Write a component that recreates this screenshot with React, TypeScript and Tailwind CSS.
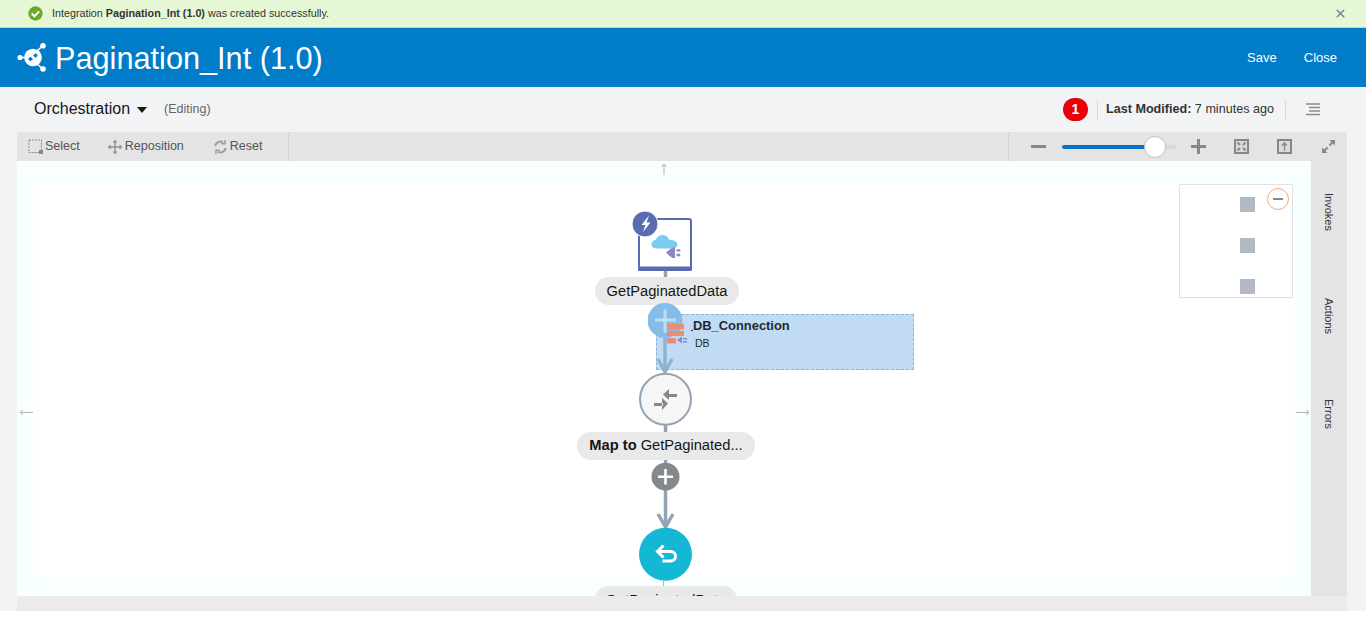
import React from "react";
import { X } from "lucide-react";

const Pill = ({ className, children }: { className: string; children: React.ReactNode }) => (
  <div className={"absolute flex items-center justify-center rounded-[14px] bg-[#e9e9e9] text-[14.7px] text-[#161616] whitespace-nowrap h-[28px] " + className}>{children}</div>
);

const SelectIcon = () => (
  <svg width="16" height="16" viewBox="0 0 16 16" className="shrink-0">
    <rect x="1" y="1" width="12.5" height="12.5" fill="none" stroke="#8a8d90" strokeWidth="1" strokeDasharray="2 1" />
    <rect x="11" y="11" width="4" height="4" fill="#85888b" />
  </svg>
);
const MoveIcon = () => (
  <svg width="16" height="16" viewBox="0 0 16 16" className="shrink-0" fill="none" stroke="#8f9295" strokeWidth="1.4">
    <path d="M8 2v12M2 8h12" />
    <path d="M6 3.200L8 1l2 2.200zM6 12.800L8 15l2-2.200zM3.200 6L1 8l2.200 2zM12.800 6L15 8l-2.200 2z" fill="#8f9295" strokeWidth="0.6" />
  </svg>
);
const ResetIcon = () => (
  <svg width="15" height="16" viewBox="0 0 15 16" className="shrink-0" fill="none" stroke="#9a9da0" strokeWidth="2">
    <path d="M2.200 7A5.400 5.400 0 0 1 10 3.200" />
    <path d="M12.800 9A5.400 5.400 0 0 1 5 12.800" />
    <path d="M12 1v3.800H8.200M3 15v-3.800h3.800" strokeWidth="1.500" />
  </svg>
);

const Logo = () => (
  <svg width="30" height="30" viewBox="0 0 30 30" className="shrink-0">
    <g stroke="#fff" strokeWidth="1.6" fill="#fff">
      <path d="M3 14.500h8M20 8l6-5.500M20 21l6 5" />
      <circle cx="3" cy="14.500" r="1.800" />
      <circle cx="26" cy="2.800" r="2" />
      <circle cx="26" cy="26" r="2" />
    </g>
    <circle cx="16" cy="14.500" r="8.800" fill="#fff" />
    <path d="M11.500 16h4M13.500 14v4" stroke="#007cc8" strokeWidth="1.800" />
    <path d="M16.500 12.500h4M18.500 10.500v4" stroke="#007cc8" strokeWidth="1.800" />
  </svg>
);

const Diagram = () => (
  <svg width="1294" height="435" viewBox="0 0 1294 435" className="absolute left-0 top-0">
    {/* connectors */}
    <path d="M648.500 108v10M648.500 264v8M648.500 298v8M648.500 328v38" stroke="#94a3b3" strokeWidth="3.500" fill="none" />
    <path d="M641 353l7.500 13 7.500-13" stroke="#94a3b3" strokeWidth="3.500" fill="none" />

    {/* trigger card */}
    <rect x="622" y="58" width="52" height="51" rx="2" fill="#fff" stroke="#5b6bb1" strokeWidth="2" />
    <rect x="621" y="105.500" width="54" height="4.500" rx="1.500" fill="#5b6bb1" />
    <path d="M639 87.500c-3 0-4.500-2-4.500-4.200 0-2.500 2-4.300 4.200-4.300 .8-3 3.500-5 6.600-5 3.500 0 6.200 2.300 7 5 3.500-.5 8.200 1 8.200 4.300 0 2.700-2 4.200-4.500 4.200z" fill="#7acdf1" />
    <path d="M649 91.500l3-2.500 3.500-2.500h2.500v10.500h-2.500l-3.500-2.500z" fill="#8f86c3" />
    <path d="M659.500 88.200h3.800v2.400h-3.800zM659.500 92.800h3.800v2.400h-3.800z" fill="#8f86c3" />
    <circle cx="628" cy="63" r="13" fill="#5b6bb1" stroke="#fff" strokeWidth="1" />
    <path d="M632 54.500l-7.500 9.500h4l-2.500 7 7.500-9.500h-4z" fill="#fff" />

    {/* map node */}
    <circle cx="648.500" cy="238.300" r="25.500" fill="#f6f6f6" stroke="#94a3b3" strokeWidth="2" />
    <path d="M637 242h9v3h-9zM645 237v12l6-6.500zM652 233h8v3h-8zM652 228v11l-6-5.500z" fill="#85888b" />

    {/* plus node */}
    <circle cx="648.500" cy="315.700" r="14" fill="#85898c" />
    <path d="M648.500 308v15.400M641 315.700h15" stroke="#fff" strokeWidth="2.600" />

    {/* return node */}
    <circle cx="648.500" cy="393.300" r="26.500" fill="#14b8d4" />
    <path d="M641 390.500h12.500c3.500 0 5 2.300 5 4.700s-1.500 4.800-5 4.800h-8" fill="none" stroke="#fff" strokeWidth="3" />
    <path d="M646.500 384.500l-6 6 6 6" fill="none" stroke="#fff" strokeWidth="3" />

    {/* pan arrows */}
    <g stroke="#b5b5b5" strokeWidth="1" fill="none">
      <path d="M647 14V3M644.500 6l2.500-3 2.500 3" />
      <path d="M646.500 420v11M644 428l2.500 3 2.500-3" />
      <path d="M3 251.500h13M6 249l-3 2.500 3 2.500" />
      <path d="M1279 251.500h13M1289 249l3 2.500-3 2.500" />
    </g>
  </svg>
);

export default function App() {
  return (
    <div className="w-[1366px] h-[620px] overflow-hidden bg-white font-['Liberation_Sans',Arial,sans-serif]">
      {/* success banner */}
      <div className="h-[28px] bg-[#e6f7d5] border-b border-[#bfdcae] flex items-center pl-[28px] pr-[19px]">
        <svg width="15" height="15" viewBox="0 0 15 15" className="shrink-0 mr-[9px]">
          <circle cx="7.500" cy="7.500" r="7.200" fill="#6bab29" />
          <path d="M3.800 7.500l2.600 2.700 4.800-4.800" fill="none" stroke="#fff" strokeWidth="2" />
        </svg>
        <span className="text-[10.75px] text-[#333]">Integration <span className="font-bold">Pagination_Int (1.0)</span> was created successfully.</span>
        <X className="ml-auto text-[#7f8a8a]" size={13} strokeWidth={3} />
      </div>

      {/* title bar */}
      <div className="h-[59px] bg-[#007cc8] flex items-center pl-[17px] pr-[29px] text-white">
        <Logo />
        <h1 className="ml-[8px] mt-[4px] text-[30.7px] leading-none">Pagination_Int (1.0)</h1>
        <button className="ml-auto text-[13px]">Save</button>
        <button className="ml-[27px] text-[13px]">Close</button>
      </div>

      {/* body */}
      <div className="h-[524px] bg-[#f2f3f5] pl-[17px] pr-[19px] flex flex-col">
        <div className="h-[45px] flex items-center">
          <span className="ml-[17px] text-[16px] text-[#161616] mb-[2px]">Orchestration</span>
          <svg width="10" height="6" viewBox="0 0 10 6" className="ml-[7px] mt-[1px]"><path d="M0 0h10L5 6z" fill="#161616" /></svg>
          <span className="ml-[17px] text-[12.500px] text-[#666]">(Editing)</span>

          <span className="ml-auto w-[25px] h-[23px] rounded-full bg-[#e8000b] text-white text-[14px] font-bold flex items-center justify-center">1</span>
          <span className="ml-[9px] h-[20px] w-px bg-[#d9d9d9]" />
          <span className="ml-[8px] text-[12.600px] text-[#333]"><b>Last Modified:</b> 7 minutes ago</span>
          <span className="ml-[11px] h-[20px] w-px bg-[#d9d9d9]" />
          <svg width="14" height="14" viewBox="0 0 14 14" className="ml-[20px] mr-[27px]" stroke="#8a8d90" strokeWidth="1.500">
            <path d="M0 1h14M3 4.500h11M3 8h11M0 11.500h14" />
          </svg>
        </div>

        {/* toolbar */}
        <div className="h-[29px] bg-[#e4e4e4] flex items-center text-[#505558]">
          <div className="h-full flex items-center pl-[11px] w-[272px] border-r border-[#d3d6d8]">
            <SelectIcon />
            <span className="ml-px text-[12.500px]">Select</span>
            <span className="ml-[27px]"><MoveIcon /></span>
            <span className="ml-[2px] text-[12.500px]">Reposition</span>
            <span className="ml-[29px]"><ResetIcon /></span>
            <span className="ml-[2px] text-[12.500px]">Reset</span>
          </div>
          <div className="ml-auto h-full w-[339px] border-l border-[#d3d6d8] flex items-center">
            <span className="ml-[22px] w-[15px] h-[3px] bg-[#85888b]" />
            <div className="relative ml-[16px] w-[114px] h-[4px] rounded-full bg-[#d8d8d8]">
              <div className="h-full w-[84px] rounded-full bg-[#0a72c9]" />
              <div className="absolute left-[82px] top-[-9px] w-[22px] h-[22px] rounded-full bg-white border border-[#c4c4c4]" />
            </div>
            <svg width="15" height="15" viewBox="0 0 15 15" className="ml-[15px]"><path d="M7.500 0v15M0 7.500h15" stroke="#85888b" strokeWidth="3" /></svg>
            <svg width="15" height="15" viewBox="0 0 15 15" className="ml-[28px]" fill="none" stroke="#85888b">
              <rect x="1" y="1" width="13" height="13" strokeWidth="2" fill="#d9d9d9" />
              <path d="M3.500 3.500l2.500 2.500M11.500 3.500l-2.500 2.500M3.500 11.500l2.500-2.500M11.500 11.500l-2.500-2.500" strokeWidth="1.800" />
            </svg>
            <svg width="15" height="15" viewBox="0 0 15 15" className="ml-[28px]" fill="none" stroke="#85888b">
              <rect x="1" y="1" width="13" height="13" strokeWidth="2" fill="#dcdcdc" />
              <path d="M7.500 12V4M5 6.500l2.500-2.500 2.500 2.500" strokeWidth="1.300" />
            </svg>
            <svg width="15" height="15" viewBox="0 0 15 15" className="ml-[29px]" fill="#85888b">
              <path d="M8.500 1H14v5.500l-2-2-2.800 2.800-1.500-1.500L10.500 3zM6.500 14H1V8.500l2 2 2.800-2.800 1.500 1.500L4.500 12z" />
            </svg>
          </div>
        </div>

        {/* canvas + side rail */}
        <div className="h-[435px] flex">
          <div className="relative w-[1294px] bg-[#f7ffff] overflow-hidden">
            <div className="absolute left-[17px] top-[20px] w-[1260px] h-[397px] bg-white" />
            <Diagram />

            <Pill className="left-[578px] top-[116px] w-[144px]">GetPaginatedData</Pill>

            <div className="absolute left-[639px] top-[153px] w-[258px] h-[56px] bg-[#c1dbf2] border border-dashed border-[#7fb6e4] pl-[38px] pt-[3px] text-[#1f2a33]">
              <div className="relative text-[12.900px] font-bold leading-[15px] -ml-[2px]">
                <span className="absolute left-[-2px] top-[12px] w-[2px] h-px bg-[#1f2a33]" />
                DB_Connection
              </div>
              <div className="text-[10.500px] leading-[12px] mt-[4px]">DB</div>
            </div>
            <svg width="42" height="70" viewBox="0 0 42 70" className="absolute left-[631px] top-[142px]">
              <circle cx="17" cy="17.500" r="17.500" fill="#85bde8" />
              <path d="M17 6.500v23M7 17h21" stroke="#c2dcf2" strokeWidth="3" />
              <path d="M17 35v34" stroke="#8fb2d2" strokeWidth="3.500" />
              <path d="M10 56l7 13 7-13" fill="none" stroke="#8fb2d2" strokeWidth="3.500" />
              <path d="M19 21h17v5.500H19zM19 28h17v5H19zM19 35h9v5.500h-9z" fill="#ea8d75" />
              <path d="M29 37l5-3.500v7z" fill="#8f86c3" />
              <path d="M35 35h4v1.500h-4zM35 38h4v1.500h-4z" fill="#8f86c3" />
            </svg>

            <Pill className="left-[560px] top-[271px] w-[178px] gap-[4px] -mt-[0.5px]"><b>Map to</b><span>GetPaginated...</span></Pill>
            <Pill className="left-[578px] top-[425px] w-[142px] items-start pt-[3px] text-[#555]">GetPaginatedData</Pill>

            {/* overview map */}
            <div className="absolute left-[1162px] top-[23px] w-[114px] h-[114px] bg-white border border-[#dfe2e4] rounded-[2px]">
              <span className="absolute left-[60px] top-[12px] w-[15px] h-[15px] bg-[#b0b9c4]" />
              <span className="absolute left-[60px] top-[53px] w-[15px] h-[15px] bg-[#b0b9c4]" />
              <span className="absolute left-[60px] top-[94px] w-[15px] h-[15px] bg-[#b0b9c4]" />
              <span className="absolute left-[87px] top-[3px] w-[22px] h-[22px] rounded-full bg-white border border-[#f3a877] flex items-center justify-center">
                <span className="w-[10px] h-[2px] bg-[#7f8a94]" />
              </span>
            </div>
          </div>

          {/* side rail */}
          <div className="w-[36px] bg-[#e4e4e4] relative text-[11px] text-[#333]">
            <span className="absolute left-[9px] top-[32px] [writing-mode:vertical-rl]">Invokes</span>
            <span className="absolute left-[9px] top-[137px] [writing-mode:vertical-rl]">Actions</span>
            <span className="absolute left-[9px] top-[238px] [writing-mode:vertical-rl]">Errors</span>
          </div>
        </div>

        {/* bottom bar */}
        <div className="h-[15px] bg-[#ebebeb]" />
      </div>
    </div>
  );
}
